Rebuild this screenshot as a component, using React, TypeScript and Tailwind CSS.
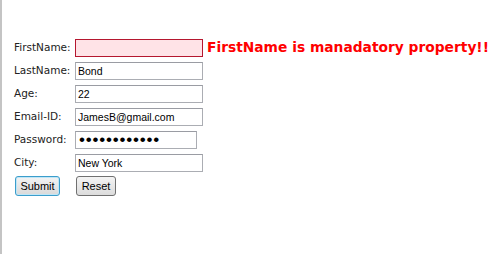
import React from "react";

const label = "text-[10.5px] text-[#222] [font-family:'DejaVu_Sans',sans-serif] whitespace-nowrap";
const inputCls =
  "h-[18px] px-[2px] border border-[#abadb3] border-t-[#9a9ca3] bg-white text-[10.5px] text-black [font-family:'Liberation_Sans',Arial,sans-serif] outline-none";

export default function App() {
  const rows: { l: string; v: string; w: string; type?: string }[] = [
    { l: "LastName:", v: "Bond", w: "w-[128px]" },
    { l: "Age:", v: "22", w: "w-[128px]" },
    { l: "Email-ID:", v: "JamesB@gmail.com", w: "w-[128px]" },
  ];
  return (
    <div className="w-[502px] h-[254px] bg-white border-l-2 border-[#c4c4c4] pl-[12px] pt-[36px]">
      <div className="grid grid-cols-[61px_auto] auto-rows-[23px] items-center">
        <div className={label}>FirstName:</div>
        <div className="flex items-center">
          <input
            readOnly
            defaultValue=""
            className="h-[18px] w-[128px] border border-[#b5172f] bg-[#ffe3e7] outline-none"
          />
          <span className="ml-[4px] text-[13.8px] font-bold text-[#ff0000] [font-family:'DejaVu_Sans',sans-serif] whitespace-nowrap">
            FirstName is manadatory property!!
          </span>
        </div>
        {rows.map((r) => (
          <React.Fragment key={r.l}>
            <div className={label}>{r.l}</div>
            <div className="flex items-center">
              <input readOnly defaultValue={r.v} className={`${inputCls} ${r.w}`} />
            </div>
          </React.Fragment>
        ))}
        <div className={label}>Password:</div>
        <div className="flex items-center">
          <input
            readOnly
            type="password"
            defaultValue="abcdefghijkl"
            className="h-[18px] w-[122px] px-[3px] border border-[#abadb3] border-t-[#9a9ca3] bg-white text-[17px] leading-none tracking-[0.8px] text-black [font-family:'Liberation_Sans',Arial,sans-serif] outline-none"
          />
        </div>
        <div className={label}>City:</div>
        <div className="flex items-center">
          <input readOnly defaultValue="New York" className={`${inputCls} w-[128px]`} />
        </div>
        <div className="flex items-center pl-[1px] pt-[1px]">
          <button className="h-[20px] w-[45px] rounded-[3px] border border-[#3c9dcb] bg-linear-to-b from-[#f4f4f4] to-[#d9d9d9] text-[11px] text-black [font-family:'Liberation_Sans',Arial,sans-serif] shadow-[inset_0_0_0_1px_#bfe6f7]">
            Submit
          </button>
        </div>
        <div className="flex items-center pl-[1px] pt-[1px]">
          <button className="h-[20px] w-[40px] rounded-[3px] border border-[#707070] bg-linear-to-b from-[#f4f4f4] to-[#dcdcdc] text-[11px] text-black [font-family:'Liberation_Sans',Arial,sans-serif]">
            Reset
          </button>
        </div>
      </div>
    </div>
  );
}
